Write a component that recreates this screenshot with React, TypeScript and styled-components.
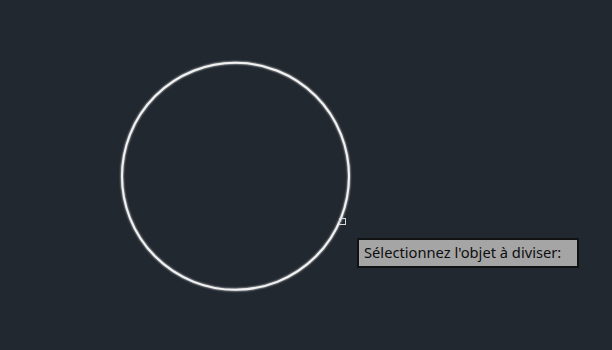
import React from "react";
import styled, { createGlobalStyle } from "styled-components";

const Global = createGlobalStyle`
  html, body { margin: 0; padding: 0; background: #212830; }
  #root { width: 612px; height: 350px; }
`;

const Canvas = styled.div`
  position: relative;
  width: 612px;
  height: 350px;
  background: #212830;
  overflow: hidden;
`;

const Drawing = styled.svg`
  position: absolute;
  left: 0;
  top: 0;
`;

const Grip = styled.div`
  position: absolute;
  left: 339px;
  top: 218px;
  width: 5px;
  height: 5px;
  border: 1px solid #d8d8d8;
`;

const Prompt = styled.div`
  position: absolute;
  left: 357px;
  top: 238px;
  width: 222px;
  height: 30px;
  box-sizing: border-box;
  border: 2px solid #111214;
  background: #a5a5a5;
  color: #0e0e10;
  font-family: "Noto Sans", "Open Sans", sans-serif;
  font-size: 14.7px;
  line-height: 25px;
  padding-left: 5px;
  white-space: nowrap;
`;

export default function App() {
  return (
    <>
      <Global />
      <Canvas>
        <Drawing width={612} height={350} viewBox="0 0 612 350">
          <defs>
            <filter id="glow" x="-10%" y="-10%" width="120%" height="120%">
              <feGaussianBlur stdDeviation="0.8" result="b" />
              <feMerge>
                <feMergeNode in="b" />
                <feMergeNode in="SourceGraphic" />
              </feMerge>
            </filter>
          </defs>
          <circle
            cx={235.5}
            cy={176.3}
            r={113.5}
            fill="none"
            stroke="#f2f2f2"
            strokeWidth={2}
            filter="url(#glow)"
          />
        </Drawing>
        <Grip />
        <Prompt>Sélectionnez l'objet à diviser:</Prompt>
      </Canvas>
    </>
  );
}
